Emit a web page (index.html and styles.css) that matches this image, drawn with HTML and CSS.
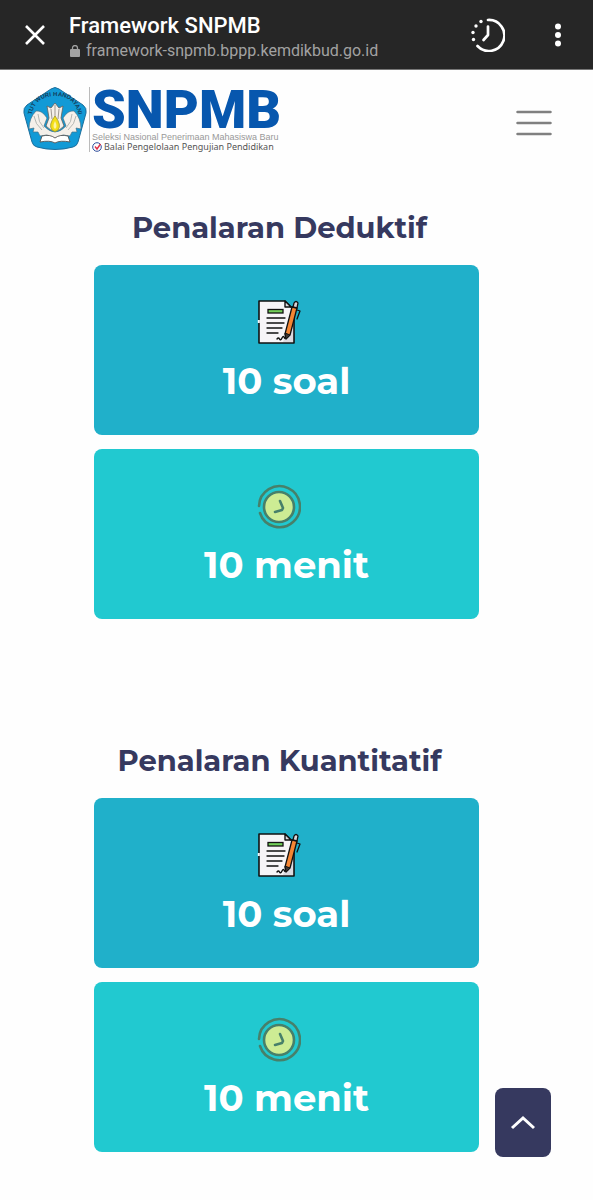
FILE: index.html
```html
<!DOCTYPE html>
<html lang="id">

<head>
    <meta charset="UTF-8">
    <meta name="viewport" content="width=device-width, initial-scale=1.0">
    <title>Framework SNPMB</title>
    <link rel="stylesheet" href="styles.css">
</head>

<body>
    <!-- Shared icons -->
    <svg class="hidden">
        <symbol id="icon-soal" viewBox="0 0 44 46">
            <path d="M2 2H28L34 8H37V44H2Z" fill="#f7f5f8" stroke="#111" stroke-width="1.6" stroke-linejoin="round" />
            <path d="M36 14V43H26Z" fill="#dcdae0" />
            <path d="M28 2V8H34Z" fill="#dcdae0" stroke="#111" stroke-width="1.4" stroke-linejoin="round" />
            <path d="M1.800 21V24" stroke="#f7f5f8" stroke-width="2" />
            <rect x="11" y="10.500" width="15" height="3.500" fill="#72cf5a" stroke="#111" stroke-width="1.3" />
            <path d="M10 19H28M10 24H27M10 29H25M10 34H21" stroke="#111" stroke-width="1.3" stroke-linecap="round" />
            <path d="M20 40q1.500-2 2.500 0t2.500-1t2.500 0l3-1" fill="none" stroke="#111" stroke-width="1.4" stroke-linecap="round" />
            <path d="M35 8L40 9L33 36L29 40L28 35Z" fill="#f58634" stroke="#111" stroke-width="1.3" stroke-linejoin="round" />
            <path d="M28 34L33 36L29 40Z" fill="#3c3432" stroke="#111" />
            <path d="M36 8L37 4Q39 1 41 4L40 9Z" fill="#d9d4d8" stroke="#111" stroke-width="1.3" />
            <path d="M40 11L43 12L40 20" fill="none" stroke="#111" stroke-width="1.3" stroke-linecap="round" stroke-linejoin="round" />
        </symbol>
        <symbol id="icon-menit" viewBox="0 0 44 46">
            <g fill="none" stroke="#47806a" stroke-width="2.600" stroke-linecap="round" stroke-linejoin="round">
                <path d="M2 23A20.500 20.500 0 1 1 3 30" />
                <circle cx="22" cy="24" r="15" fill="#cdec94" />
                <path d="M23 18L26 25L25 27L18 29" />
            </g>
        </symbol>
    </svg>

    <div class="browser-bar">
        <button class="icon-button" type="button" aria-label="Tutup">
            <svg width="24" height="24" viewBox="0 0 24 24">
                <path d="M3 3L21 21M21 3L3 21" stroke="#fff" stroke-width="2.600" />
            </svg>
        </button>
        <div class="page-info">
            <div class="page-title">Framework SNPMB</div>
            <div class="page-url">
                <svg width="10" height="12" viewBox="0 0 10 12">
                    <path d="M2.500 5V3a2.500 2.500 0 0 1 5 0V5" fill="none" stroke="#a2a2a2" stroke-width="1.300" />
                    <rect y="4" width="10" height="8" rx="1" fill="#a2a2a2" />
                </svg>
                <span>framework-snpmb.bppp.kemdikbud.go.id</span>
            </div>
        </div>
        <div class="browser-actions">
            <button class="icon-button" type="button" aria-label="Riwayat">
                <svg width="34" height="34" viewBox="0 0 34 34">
                    <g fill="none" stroke="#fff" stroke-width="2.700" stroke-linecap="round" stroke-linejoin="round">
                        <path d="M17 2A15.500 15.500 0 1 1 6.500 28" />
                        <path d="M17 8.500V17L12.500 22" />
                    </g>
                    <g fill="#fff">
                        <circle cx="10" cy="3.500" r="1.700" />
                        <circle cx="5" cy="8" r="1.700" />
                        <circle cx="2" cy="14.500" r="1.700" />
                        <circle cx="2.500" cy="21.500" r="1.700" />
                    </g>
                </svg>
            </button>
            <button class="icon-button" type="button" aria-label="Menu lainnya">
                <svg width="8" height="24" viewBox="0 0 8 24" fill="#fff">
                    <circle cx="4" cy="3.500" r="3" />
                    <circle cx="4" cy="12" r="3" />
                    <circle cx="4" cy="20.500" r="3" />
                </svg>
            </button>
        </div>
    </div>

    <header class="site-header">
        <a class="logo" href="#">
            <svg class="logo-emblem" width="64" height="66" viewBox="0 0 64 66">
                <path d="M28 3Q32 0 36 3L60 19Q64 22 63 27L55 56Q54 60 50 61Q32 66 14 61Q10 60 9 56L1 27Q0 22 4 19Z" fill="#129ad6" stroke="#1c6e9c" stroke-width="1" />
                <path id="arc" d="M8 34Q10 10 32 10Q54 10 56 34" fill="none" />
                <text class="emblem-text"><textPath href="#arc" startOffset="50%" text-anchor="middle">TUT WURI HANDAYANI</textPath></text>
                <path d="M24 32Q19 24 13 25Q6 32 6 43L11 42L10 46L15 46L17 50L24 49L32 53L40 49L47 50L49 46L54 46L53 42L58 43Q58 32 51 25Q45 24 40 32L43 40Q32 52 21 40Z" fill="#f5f0ea" stroke="#43728a" stroke-width=".7" />
                <path d="M11 30Q12 38 19 44M15 28Q15 36 21 42M53 30Q52 38 45 44M49 28Q49 36 43 42" fill="none" stroke="#a3a8a4" stroke-width=".8" />
                <path d="M24 20L28 22L32 17L36 22L40 20L38 32L41 40Q32 50 23 40L26 32Z" fill="#f5f0ea" stroke="#655e59" stroke-width=".8" />
                <path d="M28 23L29 33M32 19V31M36 23L35 33" stroke="#79716b" stroke-width=".7" />
                <path d="M32 30Q39 39 35 44Q32 47 29 44Q25 39 32 30Z" fill="#f4df18" stroke="#a29b25" stroke-width=".8" />
                <path d="M32 35Q35 41 32 43Q29 41 32 35Z" fill="#fff3a0" />
                <path d="M19 50Q27 48 32 52Q37 48 45 50L47 56Q37 54 32 57Q27 54 17 56Z" fill="#fff" stroke="#555" stroke-width=".9" />
            </svg>
            <div class="logo-text">
                <div class="logo-name">SNPMB</div>
                <div class="logo-sub">Seleksi Nasional Penerimaan Mahasiswa Baru</div>
                <div class="logo-org">
                    <svg width="10" height="10" viewBox="0 0 10 10" fill="none">
                        <circle cx="5" cy="5" r="4.300" stroke="#2f4f9c" />
                        <path d="M3 4.500L5 7L8.500 2" stroke="#e0304a" stroke-width="1.400" />
                    </svg>
                    <span>Balai Pengelolaan Pengujian Pendidikan</span>
                </div>
            </div>
        </a>
        <button class="icon-button" type="button" aria-label="Menu">
            <svg width="36" height="26" viewBox="0 0 36 26">
                <path d="M1.500 2H34.500M1.500 13H34.500M1.500 24H34.500" stroke="#808080" stroke-width="2.500" stroke-linecap="round" />
            </svg>
        </button>
    </header>

    <main class="content">
        <section class="subtest">
            <h2>Penalaran Deduktif</h2>
            <div class="card card-soal">
                <svg class="card-icon"><use href="#icon-soal" /></svg>
                <p>10 soal</p>
            </div>
            <div class="card card-menit">
                <svg class="card-icon"><use href="#icon-menit" /></svg>
                <p>10 menit</p>
            </div>
        </section>

        <section class="subtest">
            <h2>Penalaran Kuantitatif</h2>
            <div class="card card-soal">
                <svg class="card-icon"><use href="#icon-soal" /></svg>
                <p>10 soal</p>
            </div>
            <div class="card card-menit">
                <svg class="card-icon"><use href="#icon-menit" /></svg>
                <p>10 menit</p>
            </div>
        </section>
    </main>

    <a class="back-to-top" href="#" aria-label="Kembali ke atas">
        <svg width="26" height="16" viewBox="0 0 26 16">
            <path d="M2 13L13 3L24 13" fill="none" stroke="#fff" stroke-width="3" />
        </svg>
    </a>
</body>

</html>
```

FILE: styles.css
```css
* {
    box-sizing: border-box;
}

body {
    margin: 0;
    font-family: Montserrat, Inter, sans-serif;
    background: #fefefe;
    color: #36395f;
}

svg {
    display: block;
    flex-shrink: 0;
}

.hidden {
    display: none;
}

.icon-button {
    padding: 0;
    border: 0;
    background: none;
    cursor: pointer;
}

/* Browser bar */
.browser-bar {
    display: flex;
    align-items: center;
    height: 70px;
    padding: 0 31px 0 23px;
    background: #262626;
    border-bottom: 1px solid #777;
    font-family: Roboto, sans-serif;
}

.page-info {
    flex: 1;
    margin-left: 22px;
    padding-top: 6px;
}

.page-title {
    color: #fff;
    font-size: 22px;
    font-weight: 500;
    line-height: 26px;
}

.page-url {
    display: flex;
    align-items: center;
    gap: 6px;
    padding-left: 1px;
    color: #a2a2a2;
    font-size: 16px;
    line-height: 24px;
}

.browser-actions {
    display: flex;
    align-items: center;
    gap: 49px;
}

/* Site header */
.site-header {
    display: flex;
    justify-content: space-between;
    align-items: center;
    height: 106px;
    padding: 0 41px 0 23px;
}

.logo {
    display: flex;
    align-items: center;
    gap: 2px;
    margin-bottom: 8px;
    text-decoration: none;
}

.emblem-text {
    font-family: "Liberation Sans", sans-serif;
    font-size: 6px;
    font-weight: bold;
    fill: #123e5c;
}

.logo-text {
    border-left: 1px solid #bbb;
    padding-left: 2px;
    font-family: "Liberation Sans", sans-serif;
}

.logo-name {
    color: #0757ae;
    font-family: Roboto, sans-serif;
    font-size: 54px;
    font-weight: 900;
    line-height: 45px;
}

.logo-sub {
    color: #999;
    font-size: 9px;
    line-height: 10px;
}

.logo-org {
    display: flex;
    align-items: center;
    gap: 2px;
    color: #555;
    font-family: "Noto Sans", sans-serif;
    font-size: 9px;
    line-height: 10px;
}

/* Subtests */
.content {
    padding: 34px 114px 47px 94px;
}

.subtest {
    display: flex;
    flex-direction: column;
    gap: 14px;
    margin-bottom: 124px;
}

.subtest:last-child {
    margin-bottom: 0;
}

.subtest h2 {
    margin: 0 14px 5px 0;
    font-size: 29px;
    font-weight: 700;
    line-height: 36px;
    text-align: center;
}

.card {
    display: flex;
    flex-direction: column;
    align-items: center;
    padding: 34px 0 31px;
    border-radius: 8px;
    color: #fff;
}

.card-soal {
    background: #20b0ca;
}

.card-menit {
    background: #21c9d0;
}

.card-icon {
    width: 44px;
    height: 46px;
    margin-right: 15px;
}

.card p {
    margin: 13px 0 0;
    font-size: 37px;
    font-weight: 700;
    line-height: 46px;
}

.back-to-top {
    position: fixed;
    right: 42px;
    bottom: 43px;
    display: flex;
    align-items: center;
    justify-content: center;
    width: 56px;
    height: 69px;
    border-radius: 8px;
    background: #36395f;
}
```
